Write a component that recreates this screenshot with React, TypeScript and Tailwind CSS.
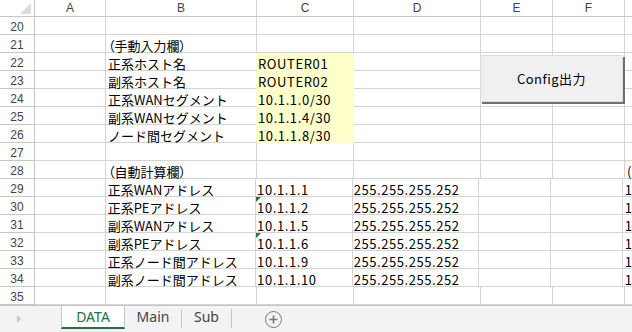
import React from "react";

type Row = {
  n: number;
  b?: string;
  c?: string;
  d?: string;
  g?: string;
  fill?: boolean;
  marker?: boolean;
};

const rows: Row[] = [
  { n: 20 },
  { n: 21, b: "（手動入力欄）" },
  { n: 22, b: "正系ホスト名", c: "ROUTER01", fill: true },
  { n: 23, b: "副系ホスト名", c: "ROUTER02", fill: true },
  { n: 24, b: "正系WANセグメント", c: "10.1.1.0/30", fill: true },
  { n: 25, b: "副系WANセグメント", c: "10.1.1.4/30", fill: true },
  { n: 26, b: "ノード間セグメント", c: "10.1.1.8/30", fill: true },
  { n: 27 },
  { n: 28, b: "（自動計算欄）", g: "(" },
  { n: 29, b: "正系WANアドレス", c: "10.1.1.1", d: "255.255.255.252", g: "1" },
  { n: 30, b: "正系PEアドレス", c: "10.1.1.2", d: "255.255.255.252", g: "1", marker: true },
  { n: 31, b: "副系WANアドレス", c: "10.1.1.5", d: "255.255.255.252", g: "1" },
  { n: 32, b: "副系PEアドレス", c: "10.1.1.6", d: "255.255.255.252", g: "1", marker: true },
  { n: 33, b: "正系ノード間アドレス", c: "10.1.1.9", d: "255.255.255.252", g: "1" },
  { n: 34, b: "副系ノード間アドレス", c: "10.1.1.10", d: "255.255.255.252", g: "1" },
  { n: 35 },
];

const cellFont = "font-['Noto_Sans_CJK_JP',sans-serif] text-[13px] text-black";

const Text = ({ children, pad = "pl-[2px]", extra = "" }: { children?: React.ReactNode; pad?: string; extra?: string }) => (
  <span className={`${pad} ${extra} leading-[13px] whitespace-nowrap ${cellFont}`}>{children}</span>
);

// full-width brackets set proportionally, like MS PGothic does
const Label = ({ text }: { text?: string }) => {
  if (!text) return null;
  return (
    <>
      {text.split(/([（）])/).map((part, i) =>
        part === "（" || part === "）" ? (
          <span key={i} className="[font-feature-settings:'palt']">
            {part}
          </span>
        ) : (
          <React.Fragment key={i}>{part}</React.Fragment>
        )
      )}
    </>
  );
};

const ColHeader = () => (
  <div className="flex h-[17px] border-b border-[#c6c6c6] font-['Liberation_Sans',sans-serif] text-[12px] text-[#444]">
    <div className="relative w-[35px] border-r border-[#c6c6c6]">
      <div className="absolute right-[3px] bottom-[2px] w-0 h-0 border-l-[11px] border-l-transparent border-b-[11px] border-b-[#dcdcdc]" />
    </div>
    {[
      ["A", "w-[71px]"],
      ["B", "w-[151px]"],
      ["C", "w-[97px]"],
      ["D", "w-[127px]"],
      ["E", "w-[72px]"],
      ["F", "w-[72px]"],
    ].map(([l, w]) => (
      <div key={l} className={`${w} border-r border-[#d4d4d4] flex items-center justify-center leading-none`}>
        {l}
      </div>
    ))}
    <div className="flex-1" />
  </div>
);

const SheetRow = ({ r }: { r: Row }) => {
  const grid = "border-[#d4d4d4]";
  return (
    <div className="flex h-[18px]">
      <div className="w-[35px] border-r border-b border-[#c6c6c6] flex items-end justify-center pb-[1px] font-['Liberation_Sans',sans-serif] text-[12px] leading-[12px] text-[#444]">
        {r.n}
      </div>
      <div className={`w-[71px] border-r border-b ${grid}`} />
      <div
        className={`w-[151px] border-b ${grid} border-r flex items-end ${r.fill ? "border-r-[#ffffcc]" : ""}`}
      >
        <Text pad="pl-[2px]">
          <Label text={r.b} />
        </Text>
      </div>
      <div
        className={`relative w-[97px] border-r border-b flex items-end ${
          r.fill ? "bg-[#ffffcc] border-[#ffffcc]" : grid
        }`}
      >
        {r.marker && (
          <div className="absolute top-0 left-0 w-0 h-0 border-t-[5px] border-t-[#1e7145] border-r-[5px] border-r-transparent" />
        )}
        <Text pad="pl-[1px]" extra="tracking-[0.6px]">{r.c}</Text>
      </div>
      <div className={`w-[127px] border-r border-b ${grid} flex items-end`}>
        <Text pad="pl-[1px]" extra="tracking-[0.55px]">{r.d}</Text>
      </div>
      <div className={`w-[72px] border-r border-b ${grid}`} />
      <div className={`w-[72px] border-r border-b ${grid}`} />
      <div className={`flex-1 border-b ${grid} flex items-end`}>
        <Text pad="pl-[2px]">{r.g}</Text>
      </div>
    </div>
  );
};

const TabBar = () => (
  <div className="h-[27px] border-t border-[#c6c6c6] bg-[#f3f3f3] flex items-start font-['Noto_Sans',sans-serif] text-[14px]">
    <div className="w-[61px] h-full flex items-center pl-[17px]">
      <div className="w-0 h-0 border-l-[4px] border-l-[#c4c4c4] border-y-[4px] border-y-transparent" />
    </div>
    <div className="w-[64px] h-[23px] bg-white border-x border-b-2 border-x-[#c6c6c6] border-b-[#217346] flex items-center justify-center text-[#217346] leading-none">
      DATA
    </div>
    <div className="w-[56px] h-[22px] flex items-center justify-center text-[#444] leading-none">Main</div>
    <div className="w-px h-[19px] mt-[3px] bg-[#c6c6c6]" />
    <div className="w-[49px] h-[22px] flex items-center justify-center text-[#444] leading-none">Sub</div>
    <div className="w-px h-[19px] mt-[3px] bg-[#c6c6c6]" />
    <div className="ml-[33px] mt-[5px] w-[17px] h-[17px] rounded-full border-[1.5px] border-[#777] flex items-center justify-center">
      <svg width="9" height="9" viewBox="0 0 9 9">
        <path d="M4.5 0.5v8M0.5 4.5h8" stroke="#777" strokeWidth="1.6" />
      </svg>
    </div>
  </div>
);

export default function App() {
  return (
    <div className="w-[632px] h-[332px] bg-white overflow-hidden flex flex-col">
      <div className="relative h-[305px] overflow-hidden">
        <ColHeader />
        {rows.map((r) => (
          <SheetRow key={r.n} r={r} />
        ))}
        <button className="absolute left-[480px] top-[55px] w-[143px] h-[47px] bg-[#f0f0f0] border border-[#dcdcdc] shadow-[2px_2px_0_#707070] flex items-center justify-center">
          <span className={`${cellFont} leading-none tracking-[0.5px]`}>Config出力</span>
        </button>
      </div>
      <TabBar />
    </div>
  );
}
